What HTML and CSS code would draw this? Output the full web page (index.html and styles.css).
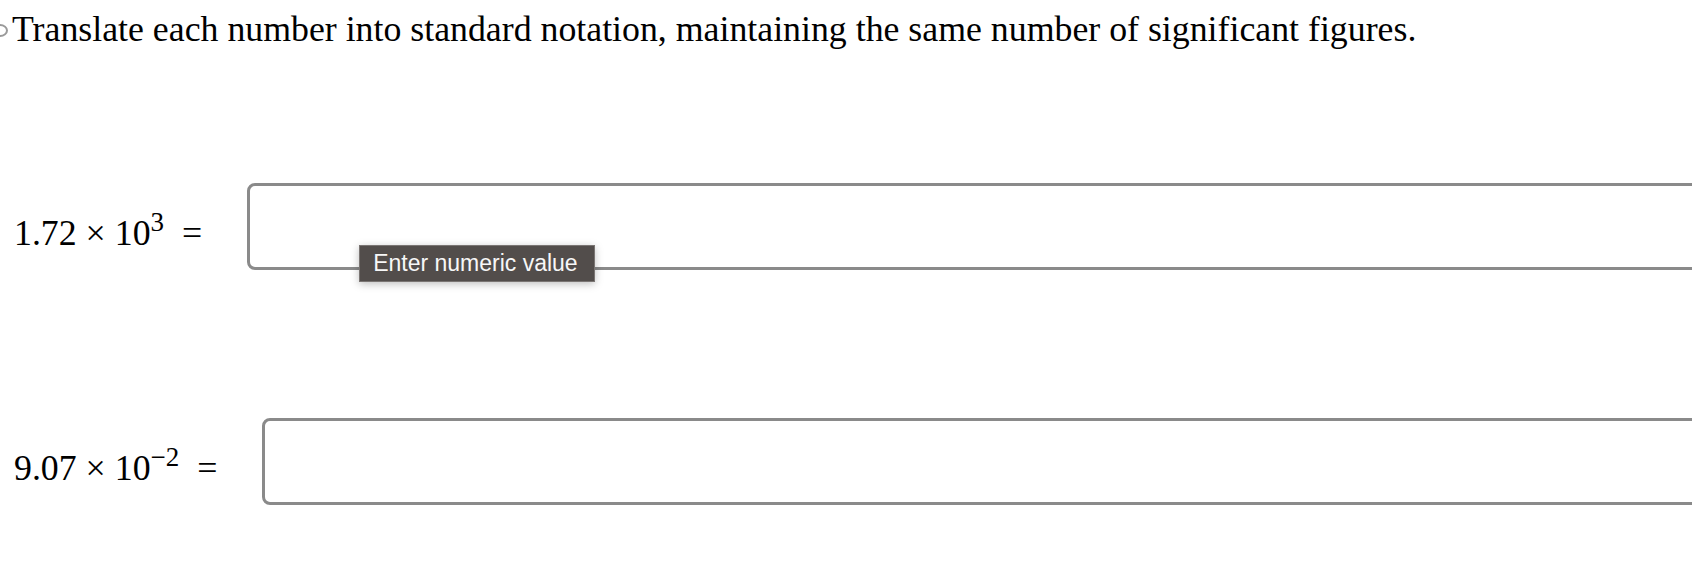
FILE: index.html
```html
<!DOCTYPE html>
<html>
<head>
<meta charset="utf-8">
<link rel="stylesheet" href="styles.css">
</head>
<body>
<div class="page">
  <p class="prompt"><span class="dot"></span>Translate each number into standard notation, maintaining the same number of significant figures.</p>
  <div class="row row-first">
    <span class="expr">1.72 × 10<sup>3</sup>&nbsp; =</span>
    <div class="field">
      <input class="answer" type="text" aria-label="answer 1">
      <div class="tooltip">Enter numeric value</div>
    </div>
  </div>
  <div class="row row-second">
    <span class="expr">9.07 × 10<sup>−2</sup>&nbsp; =</span>
    <div class="field">
      <input class="answer" type="text" aria-label="answer 2">
    </div>
  </div>
</div>
</body>
</html>
```

FILE: styles.css
```css
html, body {
  margin: 0;
  padding: 0;
  background: #ffffff;
  overflow: hidden;
}
body {
  width: 1692px;
  height: 576px;
  font-family: "Liberation Serif", "Times New Roman", serif;
  color: #000;
}
.page {
  display: flex;
  flex-direction: column;
}
.prompt {
  margin: 9px 0 0 12px;
  font-size: 35.8px;
  line-height: 40px;
  position: relative;
  white-space: nowrap;
}
.dot {
  position: absolute;
  left: -20px;
  top: 15px;
  width: 16px;
  height: 13px;
  border-radius: 50%;
  border: 2px solid #9a9a9a;
  box-sizing: border-box;
}
.row {
  display: flex;
  align-items: flex-start;
  padding-left: 14px;
}
.row-first {
  margin-top: 134px;
}
.row-second {
  margin-top: 148px;
}
.expr {
  font-size: 35.8px;
  line-height: 40px;
  padding-top: 30px;
  white-space: nowrap;
  flex-shrink: 0;
}
.expr sup {
  font-size: 27px;
  line-height: 0;
  vertical-align: 14px;
}
.field {
  position: relative;
  margin-left: 45px;
  flex-shrink: 0;
}
.answer {
  display: block;
  width: 1500px;
  height: 87px;
  box-sizing: border-box;
  border: 3px solid #8a8a8a;
  border-radius: 8px;
  background: #fff;
  outline: none;
  padding: 0 12px;
  font-size: 28px;
}
.tooltip {
  position: absolute;
  left: 112px;
  top: 62px;
  width: 236px;
  height: 37px;
  box-sizing: border-box;
  background: #524d4b;
  border: 1px solid #7a7573;
  color: #f7f7f7;
  font-family: "Liberation Sans", Arial, sans-serif;
  font-size: 23px;
  line-height: 35px;
  padding-left: 13px;
  white-space: nowrap;
  box-shadow: 0 2px 8px rgba(0, 0, 0, 0.25);
}
```
